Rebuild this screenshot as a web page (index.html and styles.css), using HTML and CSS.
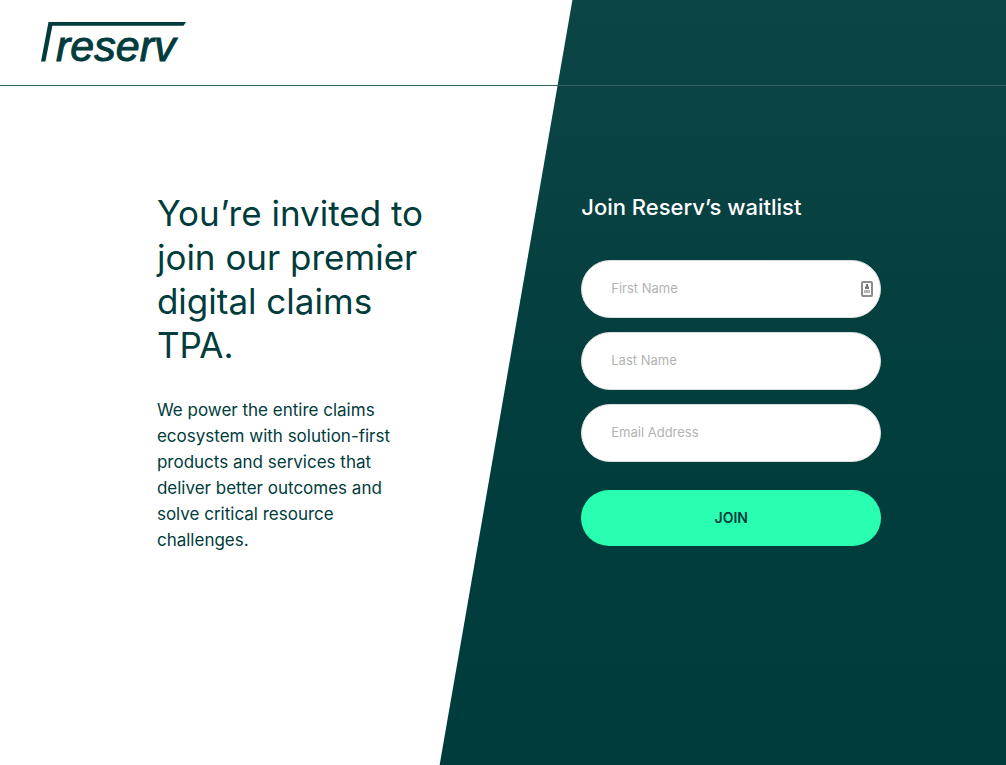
FILE: index.html
```html
<!DOCTYPE html>
<html lang="en">
<head>
    <meta charset="UTF-8">
    <meta name="viewport" content="width=device-width, initial-scale=1.0">
    <title>Reserv | Join the waitlist</title>
    <link rel="stylesheet" href="styles.css">
</head>

<body>
    <header class="header">
        <a class="logo" href="#" aria-label="Reserv">
            <svg width="156" height="54" viewBox="0 0 156 54">
                <path d="M1 41.500 8.500 2H146l-2.500 3.800H12.400L5.400 41.500z"/>
                <text x="16" y="41">reserv</text>
            </svg>
        </a>
    </header>

    <main class="main">
        <section class="intro">
            <h1>You’re invited to join our premier digital claims TPA.</h1>
            <p>We power the entire claims ecosystem with solution-first products and services that deliver better outcomes and solve critical resource challenges.</p>
        </section>

        <form class="waitlist">
            <h2>Join Reserv’s waitlist</h2>
            <div class="field">
                <input type="text" name="first" placeholder="First Name" aria-label="First Name">
                <!-- contact card -->
                <svg class="card-icon" width="12" height="16" viewBox="0 0 12 16">
                    <rect x="1" y="1" width="10" height="14" rx="1" fill="#fff" stroke="#8c8c8c" stroke-width="2"/>
                    <path d="M5 3h2v2l1 1v2H4V6l1-1z" fill="#777"/>
                    <path d="M3 9h6v3H3z" fill="#b5b5b5"/>
                </svg>
            </div>
            <div class="field">
                <input type="text" name="last" placeholder="Last Name" aria-label="Last Name">
            </div>
            <div class="field">
                <input type="email" name="email" placeholder="Email Address" aria-label="Email Address">
            </div>
            <button type="submit">JOIN</button>
        </form>
    </main>
</body>
</html>
```
FILE: styles.css
```css
* {
    box-sizing: border-box;
}

body {
    position: relative;
    min-height: 100vh;
    margin: 0;
    background-color: #fff;
    color: #003c3c;
    font-family: Inter, "Liberation Sans", sans-serif;
}

/* slanted dark panel behind the form */
body::before {
    content: "";
    position: absolute;
    inset: 0;
    z-index: -1;
    background: linear-gradient(#0c4545, #033e3e 50%, #003c3c);
    clip-path: polygon(56.9% 0, 100% 0, 100% 100%, 43.7% 100%);
}

.header {
    display: flex;
    padding: 20px 40px 11px;
    border-bottom: 1px solid #356462;
}

.logo svg {
    display: block;
    fill: #003c3c;
}

.logo text {
    font: italic 43px "Liberation Sans", sans-serif;
    stroke: #003c3c;
    stroke-width: 1px;
}

.main {
    display: flex;
    justify-content: space-between;
    gap: 40px;
    padding: 105px 12.4% 40px 15.6%;
}

.intro {
    flex: 0 1 272px;
}

.intro h1 {
    margin: 0;
    font-size: 35px;
    font-weight: 400;
    line-height: 44px;
}

.intro p {
    margin: 30px 0 0;
    font-size: 17px;
    line-height: 26px;
}

.waitlist {
    flex: 0 1 300px;
}

.waitlist h2 {
    margin: 0 0 36px;
    color: #fff;
    font-size: 22px;
    font-weight: 500;
    line-height: 33px;
}

.field {
    position: relative;
    margin-bottom: 14px;
}

.field input {
    display: block;
    width: 100%;
    height: 58px;
    padding: 0 29px 2px;
    border: 1px solid #d9dcdc;
    border-radius: 29px;
    background-color: #fff;
    color: #003c3c;
    font: 13px Inter, "Liberation Sans", sans-serif;
}

.field input::placeholder {
    color: #b3b3b3;
}

.card-icon {
    position: absolute;
    top: 21px;
    right: 8px;
}

.waitlist button {
    width: 100%;
    height: 56px;
    margin-top: 14px;
    padding: 0 0 2px;
    border: none;
    border-radius: 28px;
    background-color: #29ffb0;
    color: #003c3c;
    font: 600 14px Inter, "Liberation Sans", sans-serif;
    cursor: pointer;
}
```
